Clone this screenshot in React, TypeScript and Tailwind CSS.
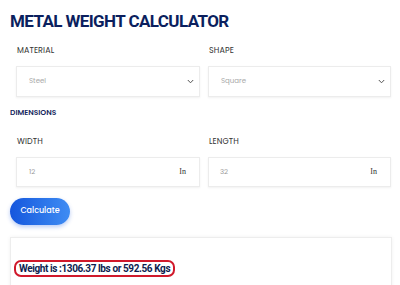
import React, { useState } from 'react';

const ChevronDown = () => (
  <svg width="7" height="5" viewBox="0 0 7 5" fill="none" stroke="#555" strokeWidth="1">
    <path d="M0.8 1 L3.5 3.8 L6.2 1" />
  </svg>
);

const Field: React.FC<{ label: string; children: React.ReactNode }> = ({ label, children }) => (
  <div className="flex flex-col">
    <div className="pl-[1px] text-[8px] leading-[10px] text-[#333] tracking-[0.1px] h-[10px]">{label}</div>
    <div className="mt-[10px]">{children}</div>
  </div>
);

const boxCls =
  'border border-[#ececec] shadow-[0_1px_2px_rgba(0,0,0,0.06)] flex items-center justify-between';

export default function App() {
  const [material] = useState('Steel');
  const [shape] = useState('Square');

  return (
    <div className="w-[400px] h-[285px] bg-white overflow-hidden font-['Poppins','Open_Sans',sans-serif]">
      <div className="pl-[10px] pt-[11px]">
        <h1 className="font-['Roboto',sans-serif] font-bold text-[17px] leading-[20px] text-[#0b1f5e] tracking-[-0.6px]">
          METAL WEIGHT CALCULATOR
        </h1>
      </div>

      <div className="grid grid-cols-[184px_183px] gap-x-[8px] pl-[16px] mt-[15px]">
        <Field label="MATERIAL">
          <div className={`${boxCls} h-[31px] pl-[12px] pr-[5px]`}>
            <span className="text-[7px] text-[#a8a8a8]">{material}</span>
            <ChevronDown />
          </div>
        </Field>
        <Field label="SHAPE">
          <div className={`${boxCls} h-[31px] pl-[12px] pr-[5px]`}>
            <span className="text-[7px] text-[#a8a8a8]">{shape}</span>
            <ChevronDown />
          </div>
        </Field>
      </div>

      <div className="pl-[10px] mt-[11px] text-[7.5px] leading-[10px] font-semibold text-[#16285e]">DIMENSIONS</div>

      <div className="grid grid-cols-[184px_183px] gap-x-[8px] pl-[16px] mt-[19px]">
        <Field label="WIDTH">
          <div className={`${boxCls} h-[30px] pl-[12px] pr-[13px]`}>
            <span className="text-[7px] text-[#999]">12</span>
            <span className="font-['Liberation_Serif',serif] text-[8px] text-[#333]">In</span>
          </div>
        </Field>
        <Field label="LENGTH">
          <div className={`${boxCls} h-[30px] pl-[11px] pr-[13px]`}>
            <span className="text-[7px] text-[#999]">32</span>
            <span className="font-['Liberation_Serif',serif] text-[8px] text-[#333]">In</span>
          </div>
        </Field>
      </div>

      <div className="pl-[10px] mt-[9px]">
        <button className="w-[60px] h-[27px] rounded-full bg-gradient-to-r from-[#1656dd] to-[#3f8cf3] text-white text-[8px] font-medium shadow-[0_2px_4px_rgba(22,86,221,0.3)]">
          Calculate
        </button>
      </div>

      <div className="ml-[10px] mr-[8px] mt-[12px] h-[60px] border border-[#ededed] shadow-[0_0_4px_rgba(0,0,0,0.06)] pt-[17px] pl-[3px]">
        <span className="inline-block border-2 border-[#d0192b] rounded-[7px] px-[3px] py-0 font-['Roboto',sans-serif] text-[10px] leading-[13px] font-bold text-[#0e1d4f] tracking-[-0.4px]">
          Weight is :1306.37 lbs or 592.56 Kgs
        </span>
      </div>
    </div>
  );
}
